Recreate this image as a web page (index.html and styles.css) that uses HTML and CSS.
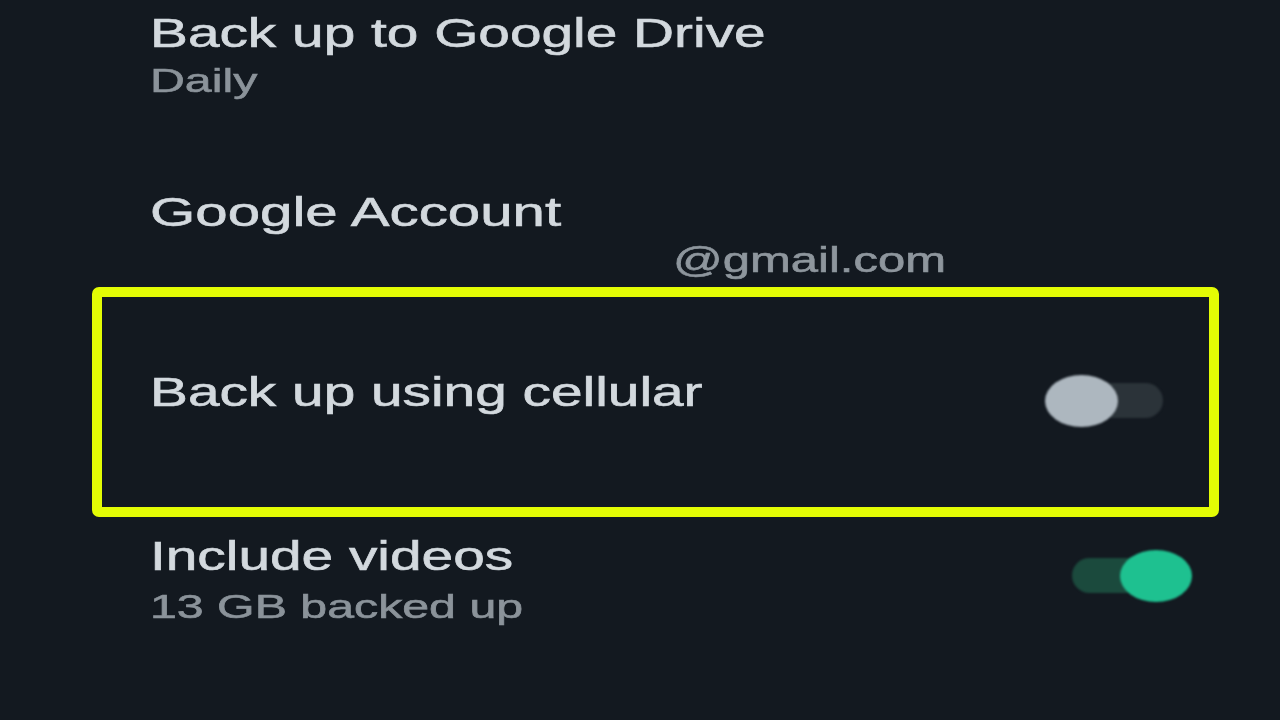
FILE: index.html
```html
<!DOCTYPE html>
<html>
<head>
<meta charset="utf-8">
<link rel="stylesheet" href="styles.css">
</head>
<body>
<div class="screen">
  <div class="item first">
    <div class="title"><span class="st">Back up to Google Drive</span></div>
    <div class="sub daily"><span class="st">Daily</span></div>
  </div>
  <div class="item account">
    <div class="title acct"><span class="st">Google Account</span></div>
    <div class="email"><span class="st">@gmail.com</span></div>
  </div>
  <div class="highlight">
    <div class="title cell"><span class="st">Back up using cellular</span></div>
    <div class="toggle off">
      <div class="track"></div>
      <div class="thumb"></div>
    </div>
  </div>
  <div class="videos">
    <div class="texts">
      <div class="title"><span class="st">Include videos</span></div>
      <div class="sub gb"><span class="st">13 GB backed up</span></div>
    </div>
    <div class="toggle on">
      <div class="track"></div>
      <div class="thumb"></div>
    </div>
  </div>
</div>
</body>
</html>
```
FILE: styles.css
```css
html, body {
  margin: 0;
  padding: 0;
  background: #131920;
}
body {
  width: 1280px;
  height: 720px;
  overflow: hidden;
  font-family: "Liberation Sans", Arial, sans-serif;
}
.screen {
  width: 1280px;
  height: 720px;
  display: flex;
  flex-direction: column;
}
.st {
  display: inline-block;
  transform: scaleX(1.42);
  transform-origin: 0 50%;
  white-space: nowrap;
  -webkit-text-stroke: 0.6px currentColor;
  filter: blur(0.35px);
}
.title {
  font-size: 40px;
  line-height: 48px;
  height: 48px;
  color: #d3d9de;
}
.acct { font-size: 41px; }
.sub {
  color: #8b939a;
  height: 44px;
  line-height: 44px;
}
.daily { font-size: 34px; margin-top: 1px; }
.gb { font-size: 34px; margin-top: 4px; }
.item {
  padding-left: 150px;
}
.first {
  padding-top: 9px;
}
.account {
  margin-top: 86px;
}
.email {
  font-size: 34.5px;
  line-height: 44px;
  height: 44px;
  color: #8e969d;
  margin-top: 2px;
  padding-left: 523px;
}
.highlight {
  margin-top: 5px;
  margin-left: 92px;
  width: 1127px;
  height: 230px;
  box-sizing: border-box;
  border: 10px solid #e3fc04;
  border-radius: 7px;
  display: flex;
  align-items: flex-start;
  justify-content: space-between;
  padding-left: 48px;
  padding-right: 46px;
}
.cell {
  margin-top: 71px;
}
.videos {
  margin-top: 15px;
  display: flex;
  align-items: flex-start;
  justify-content: space-between;
  padding-left: 150px;
  padding-right: 88px;
}
.toggle {
  position: relative;
  height: 52px;
  filter: blur(0.8px);
}
.toggle .track {
  position: absolute;
  top: 8px;
  height: 35px;
  border-radius: 18px;
}
.toggle .thumb {
  position: absolute;
  top: 0;
  height: 52px;
  border-radius: 50%;
}
.toggle.off {
  width: 118px;
  margin-top: 78px;
}
.toggle.off .track {
  left: 33px;
  width: 85px;
  background: #2b3339;
}
.toggle.off .thumb {
  left: 0;
  width: 73px;
  background: #adb7bf;
}
.toggle.on {
  width: 120px;
  margin-top: 18px;
}
.toggle.on .track {
  left: 0;
  width: 104px;
  background: #1b4a3d;
}
.toggle.on .thumb {
  left: 48px;
  width: 72px;
  background: #1ec190;
}
```
